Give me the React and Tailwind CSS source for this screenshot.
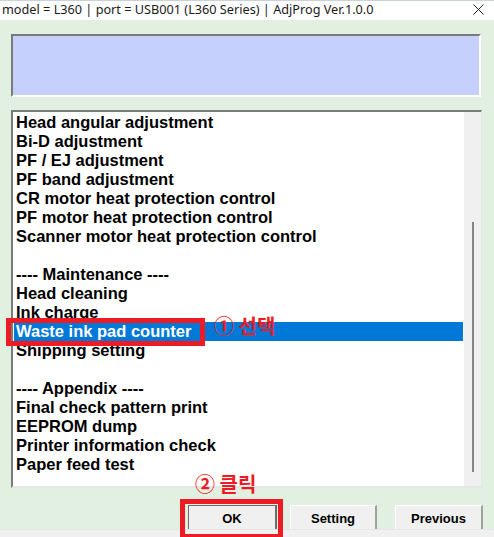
import React from 'react';

const items = [
  'Head angular adjustment',
  'Bi-D adjustment',
  'PF / EJ adjustment',
  'PF band adjustment',
  'CR motor heat protection control',
  'PF motor heat protection control',
  'Scanner motor heat protection control',
  '',
  '---- Maintenance ----',
  'Head cleaning',
  'Ink charge',
  'Waste ink pad counter',
  'Shipping setting',
  '',
  '---- Appendix ----',
  'Final check pattern print',
  'EEPROM dump',
  'Printer information check',
  'Paper feed test',
];

const SELECTED = 11;

function WinButton({ label, width, isDefault }) {
  return (
    <div
      className={`h-[30px] flex items-start justify-center pt-[3px] bg-[#f0f0f0] text-[13px] font-bold text-black border-t border-l border-r-2 ${
        isDefault ? 'border-[#6d6d6d] border-r-[#6d6d6d]' : 'border-white border-r-[#a0a0a0]'
      } ${width}`}
    >
      {label}
    </div>
  );
}

export default function App() {
  return (
    <div className="relative w-[494px] h-[537px] overflow-hidden bg-[#e1f0e1] flex flex-col font-['Liberation_Sans',Arial,sans-serif]">
      {/* title bar */}
      <div className="h-[20px] shrink-0 bg-white border-t border-[#c9d1dc] flex items-center justify-between pl-[2px] pr-[10px]">
        <span className="text-[12.7px] leading-none text-[#1a1a1a] font-['Noto_Sans','Liberation_Sans',sans-serif] -mt-[2px]">
          model = L360 | port = USB001 (L360 Series) | AdjProg Ver.1.0.0
        </span>
        <svg width="11" height="11" viewBox="0 0 11 11" className="-mt-[3px]">
          <path d="M0.5 0.5 L10.5 10.5 M10.5 0.5 L0.5 10.5" stroke="#222" strokeWidth="1" />
        </svg>
      </div>

      {/* status box */}
      <div className="mt-[14px] ml-[11px] w-[470px] h-[63px] shrink-0 bg-[#c6d0fc] border-t-2 border-l-2 border-[#7a7a7a] border-r-2 border-b-2 border-r-white border-b-white" />

      {/* list box */}
      <div className="mt-[13px] ml-[11px] w-[471px] h-[378px] shrink-0 bg-white border-t-2 border-l-2 border-[#7a7a7a] border-r border-b-2 border-r-[#e6e6e6] border-b-[#e6e6e6] flex">
        <div className="flex-1 pt-[1px] pl-[1px] pr-[1px]">
          {items.map((t, i) => (
            <div
              key={i}
              className={`h-[19px] flex items-center pl-[2px] text-[16.5px] font-bold leading-none whitespace-nowrap ${
                i === SELECTED ? 'bg-[#0078d7] text-white' : 'text-black'
              }`}
            >
              {t}
            </div>
          ))}
        </div>
        <div className="w-[17px] bg-[#f0f0f0] flex justify-center pt-[110px] pb-[14px]">
          <div className="w-[2px] h-full bg-[#858585]" />
        </div>
      </div>

      {/* buttons */}
      <div className="mt-[17px] flex justify-end pr-[11px] h-[24px] shrink-0">
        <WinButton label="OK" width="w-[89px]" isDefault />
        <div className="w-[13px]" />
        <WinButton label="Setting" width="w-[87px]" />
        <div className="w-[18px]" />
        <WinButton label="Previous" width="w-[88px]" />
      </div>

      {/* bottom strip */}
      <div className="relative flex-1 bg-[#f0f0f0] border-t border-[#e6e6e6]" />

      {/* annotations */}
      <div className="absolute left-[6px] top-[318px] w-[199px] h-[28px] border-[5px] border-[#ed1c24]" />
      <div className="absolute left-[214px] top-[316px] text-[20px] font-bold text-[#ed1c24] leading-none font-['Noto_Sans_CJK_KR','Noto_Sans',sans-serif]">
        ① 선택
      </div>
      <div className="absolute left-[180px] top-[499px] w-[103px] h-[40px] border-[5px] border-[#ed1c24]" />
      <div className="absolute left-[195px] top-[474px] text-[20px] font-bold text-[#ed1c24] leading-none font-['Noto_Sans_CJK_KR','Noto_Sans',sans-serif]">
        ② 클릭
      </div>
    </div>
  );
}
